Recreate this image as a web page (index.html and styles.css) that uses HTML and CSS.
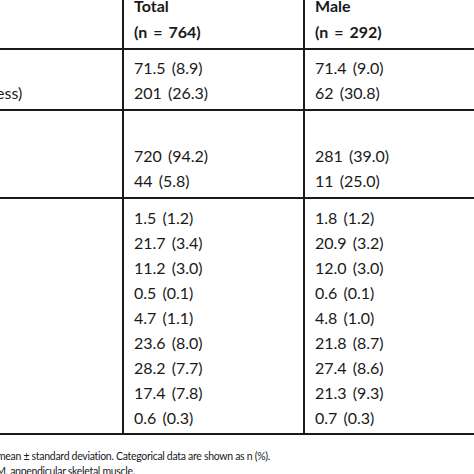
FILE: index.html
```html
<!DOCTYPE html>
<html>
<head>
<meta charset="utf-8">
<link rel="stylesheet" href="styles.css">
</head>
<body>
<div class="page">
  <table class="data">
    <tbody>
      <tr class="head">
        <td class="label"></td>
        <td class="val"><div>Total</div><div>(n = 764)</div></td>
        <td class="val last"><div>Male</div><div>(n = 292)</div></td>
      </tr>
      <tr class="sec s1">
        <td class="label"><div>&nbsp;</div><div class="clip">ess)</div></td>
        <td class="val"><div>71.5 (8.9)</div><div>201 (26.3)</div></td>
        <td class="val last"><div>71.4 (9.0)</div><div>62 (30.8)</div></td>
      </tr>
      <tr class="sec s2">
        <td class="label"></td>
        <td class="val"><div>&nbsp;</div><div>720 (94.2)</div><div>44 (5.8)</div></td>
        <td class="val last"><div>&nbsp;</div><div>281 (39.0)</div><div>11 (25.0)</div></td>
      </tr>
      <tr class="sec s3">
        <td class="label"></td>
        <td class="val">
          <div>1.5 (1.2)</div><div>21.7 (3.4)</div><div>11.2 (3.0)</div><div>0.5 (0.1)</div><div>4.7 (1.1)</div><div>23.6 (8.0)</div><div>28.2 (7.7)</div><div>17.4 (7.8)</div><div>0.6 (0.3)</div>
        </td>
        <td class="val last">
          <div>1.8 (1.2)</div><div>20.9 (3.2)</div><div>12.0 (3.0)</div><div>0.6 (0.1)</div><div>4.8 (1.0)</div><div>21.8 (8.7)</div><div>27.4 (8.6)</div><div>21.3 (9.3)</div><div>0.7 (0.3)</div>
        </td>
      </tr>
    </tbody>
  </table>
  <div class="notes">
    <p class="n1">mean ± standard deviation. Categorical data are shown as n (%).</p>
    <p class="n2">ASM, appendicular skeletal muscle.</p>
  </div>
</div>
</body>
</html>
```
FILE: styles.css
```css
html, body {
  margin: 0;
  padding: 0;
  background: #ffffff;
  overflow: hidden;
}
.page {
  width: 474px;
  height: 474px;
  overflow: hidden;
  font-family: Lato, "Open Sans", sans-serif;
  color: #1a1a1a;
}
.data {
  border-collapse: separate;
  border-spacing: 0;
  width: 700px;
  margin-top: -7px;
  font-size: 16px;
  line-height: 25px;
  word-spacing: 2px;
  table-layout: fixed;
}
.data td {
  vertical-align: top;
  border-bottom: 2px solid #1a1a1a;
  padding: 0;
  white-space: nowrap;
}
.data td.label {
  width: 122px;
  overflow: hidden;
}
.clip {
  text-indent: -4px;
}
.data td.val {
  border-left: 2px solid #1a1a1a;
  padding-left: 10px;
  width: 169px;
}
.data td.val.last {
  width: 385px;
}
.head td {
  font-weight: 700;
  line-height: 26px;
  padding-bottom: 3px;
}
.s1 td { padding-top: 5px; padding-bottom: 4px; }
.s2 td { padding-top: 7px; padding-bottom: 4px; }
.s3 td { padding-top: 6px; padding-bottom: 3px; }
.notes {
  margin-top: 14px;
  font-size: 10.5px;
  line-height: 15px;
  letter-spacing: -0.3px;
  overflow: hidden;
}
.notes p {
  margin: 0;
  white-space: nowrap;
}
.n1 { text-indent: -3px; }
.n2 { text-indent: -16px; }
```
